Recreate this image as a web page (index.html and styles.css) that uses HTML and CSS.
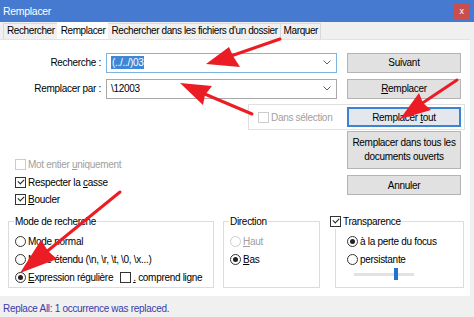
FILE: index.html
```html
<!DOCTYPE html>
<html lang="fr">
<head>
    <meta charset="UTF-8">
    <title>Remplacer</title>
    <link rel="stylesheet" href="styles.css">
</head>
<body>
<div class="window">
    <div class="titlebar">
        <span class="title">Remplacer</span>
        <span class="close">x</span>
    </div>

    <div class="tabs">
        <span class="tab">Rechercher</span>
        <span class="tab active">Remplacer</span>
        <span class="tab">Rechercher dans les fichiers d'un dossier</span>
        <span class="tab">Marquer</span>
    </div>

    <div class="body">
        <div class="panel">
            <div class="row">
                <span class="field-label">Recherche :</span>
                <div class="combo focused">
                    <span class="sel">(../../)03</span>
                    <svg class="chev" width="8" height="5" viewBox="0 0 8 5"><polyline points="0.5,0.5 4,4 7.5,0.5" fill="none" stroke="#606060" stroke-width="1"/></svg>
                </div>
                <button class="btn">Suivant</button>
            </div>
            <div class="row">
                <span class="field-label">Remplacer par :</span>
                <div class="combo">
                    <span class="val">\12003</span>
                    <svg class="chev" width="8" height="5" viewBox="0 0 8 5"><polyline points="0.5,0.5 4,4 7.5,0.5" fill="none" stroke="#606060" stroke-width="1"/></svg>
                </div>
                <button class="btn"><u>R</u>emplacer</button>
            </div>

            <div class="selection-row">
                <div class="selection-box">
                    <label class="check disabled"><span class="cb"></span><span>Dans sélection</span></label>
                    <button class="btn default">Remplacer <u>t</u>out</button>
                </div>
            </div>

            <div class="options">
                <div class="checks">
                    <label class="check disabled"><span class="cb"></span><span>Mot entier <u>u</u>niquement</span></label>
                    <label class="check"><span class="cb on"></span><span>Respecter la <u>c</u>asse</span></label>
                    <label class="check"><span class="cb on"></span><span><u>B</u>oucler</span></label>
                </div>
                <div class="side-buttons">
                    <button class="btn tall">Remplacer dans tous les<br>documents ouverts</button>
                    <button class="btn">Annuler</button>
                </div>
            </div>

            <div class="groups">
                <fieldset class="group mode">
                    <legend>Mode de recherche</legend>
                    <label class="radio"><span class="rd"></span><span>Mode normal</span></label>
                    <label class="radio"><span class="rd"></span><span>Mode étendu (\n, \r, \t, \0, \x...)</span></label>
                    <div class="radio-line">
                        <label class="radio"><span class="rd on"></span><span><u>E</u>xpression régulière</span></label>
                        <label class="check"><span class="cb"></span><span><u>.</u> comprend ligne</span></label>
                    </div>
                </fieldset>
                <fieldset class="group direction">
                    <legend>Direction</legend>
                    <label class="radio disabled"><span class="rd"></span><span><u>H</u>aut</span></label>
                    <label class="radio"><span class="rd on"></span><span><u>B</u>as</span></label>
                </fieldset>
                <fieldset class="group transp">
                    <legend><label class="check"><span class="cb on"></span><span>Transparence</span></label></legend>
                    <label class="radio"><span class="rd on"></span><span>à la perte du focus</span></label>
                    <label class="radio"><span class="rd"></span><span>persistante</span></label>
                    <div class="slider"><span class="thumb"></span></div>
                </fieldset>
            </div>
        </div>
    </div>

    <div class="status">Replace All: 1 occurrence was replaced.</div>

    <!-- flèches rouges d'annotation -->
    <svg class="arrows" width="474" height="317" viewBox="0 0 474 317">
        <g stroke="#ec1c24" stroke-width="3" stroke-linecap="round" fill="none">
            <line x1="280" y1="39" x2="228" y2="57"/>
            <line x1="252" y1="114" x2="200" y2="92"/>
            <line x1="457" y1="80" x2="418" y2="106"/>
            <line x1="120" y1="192" x2="45" y2="253"/>
        </g>
        <g fill="#ec1c24">
            <polygon points="206,64 229,47 233,56 240,67"/>
            <polygon points="180,83 212,86 205,95 203,105"/>
            <polygon points="400,119 419,93 423,103 431,110"/>
            <polygon points="20,273 41,240 48,251 57,259"/>
        </g>
    </svg>
</div>
</body>
</html>
```

FILE: styles.css
```css
* {
    box-sizing: border-box;
}
body {
    margin: 0;
    font-family: "Liberation Sans", Arial, sans-serif;
    font-size: 10px;
    letter-spacing: -0.3px;
    color: #000;
}
.window {
    position: relative;
    width: 474px;
    height: 317px;
    background: #f0f0f0;
    display: flex;
    flex-direction: column;
    overflow: hidden;
}

/* barre de titre */
.titlebar {
    height: 22px;
    background: #4679d0;
    display: flex;
    align-items: center;
    justify-content: space-between;
    padding: 0 4px 0 3px;
}
.title {
    color: #fff;
    font-size: 10.5px;
}
.close {
    width: 17px;
    height: 16px;
    background: #c94f4f;
    color: #fff;
    font-size: 9px;
    display: flex;
    align-items: center;
    justify-content: center;
}

/* onglets */
.tabs {
    height: 16px;
    display: flex;
    padding-left: 3px;
    margin-top: 1px;
    letter-spacing: -0.4px;
}
.tab {
    border: 1px solid #d9d9d9;
    border-bottom: none;
    padding: 0 2px 0 3px;
    line-height: 14px;
    background: #f0f0f0;
    margin-right: -1px;
}
.tab.active {
    background: #fff;
    border-color: #fff;
    position: relative;
    z-index: 1;
    margin-top: -1px;
    line-height: 16px;
}

.body {
    flex: 1;
    padding-right: 4px;
    display: flex;
}
.panel {
    flex: 1;
    background: #fff;
    border-top: 1px solid #e3e3e3;
    padding-top: 12px;
    margin-bottom: 1px;
}

/* lignes de saisie */
.row {
    display: flex;
    align-items: center;
    height: 21px;
    margin-bottom: 5px;
}
.field-label {
    width: 103px;
    text-align: right;
    padding-right: 2px;
}
.combo {
    width: 231px;
    height: 20px;
    margin-left: 3px;
    margin-right: 10px;
    border: 1px solid #a8a8a8;
    display: flex;
    align-items: center;
    justify-content: space-between;
    padding: 0 5px 0 4px;
}
.combo.focused {
    border-color: #7eb4e0;
}
.sel {
    background: #3f86d6;
    color: #fff;
    line-height: 13px;
    padding: 0 1px;
}
.chev {
    display: block;
}

.btn {
    width: 114px;
    height: 20px;
    border: 1px solid #b4b4b4;
    background: #e1e1e1;
    font-family: inherit;
    font-size: 10px;
    letter-spacing: -0.3px;
    color: #000;
    padding: 0;
}
.btn.default {
    border: 2px solid #3b83d3;
    background: #e4e8ee;
}
.btn.tall {
    height: 38px;
    line-height: 14px;
    padding: 0 2px;
}

/* cadre "Dans sélection" */
.selection-row {
    display: flex;
    padding-left: 248px;
}
.selection-box {
    width: 217px;
    height: 26px;
    border: 1px solid #e0e0e0;
    display: flex;
    align-items: center;
    justify-content: space-between;
    padding: 0 3px 0 9px;
}

/* cases à cocher et boutons radio */
.check, .radio {
    display: flex;
    align-items: center;
    white-space: nowrap;
}
.cb, .rd {
    width: 11px;
    height: 11px;
    border: 1px solid #333;
    background: #fff;
    margin-right: 2px;
    position: relative;
    flex: none;
}
.cb.on::after {
    content: "";
    position: absolute;
    left: 2px;
    top: 1px;
    width: 5px;
    height: 3px;
    border-left: 1px solid #222;
    border-bottom: 1px solid #222;
    transform: rotate(-45deg);
}
.rd {
    border-radius: 50%;
}
.rd.on::after {
    content: "";
    position: absolute;
    left: 2px;
    top: 2px;
    width: 5px;
    height: 5px;
    border-radius: 50%;
    background: #222;
}
.disabled {
    color: #a0a0a0;
}
.disabled .cb, .disabled .rd {
    border-color: #cccccc;
}

.options {
    display: flex;
    margin-top: 1px;
}
.checks {
    flex: 1;
    padding-left: 15px;
    padding-top: 25px;
}
.checks .check {
    height: 17.5px;
}
.side-buttons {
    width: 114px;
    margin-right: 9px;
    display: flex;
    flex-direction: column;
    gap: 6px;
}

/* groupes du bas */
.groups {
    display: flex;
    padding-left: 8px;
    margin-top: 6px;
    gap: 9px;
}
.group {
    margin: 0;
    min-width: 0;
    border: 1px solid #dcdcdc;
    height: 73px;
    padding: 4px 0 0 6px;
}
.group legend {
    padding: 0 1px;
    margin-left: -1px;
    line-height: 14px;
}
.group .radio {
    height: 18px;
}
.mode {
    width: 206px;
}
.direction {
    width: 97px;
}
.transp {
    width: 129px;
    margin-left: 6px;
    padding-left: 11px;
}
.transp legend {
    margin-left: -18px;
}
.radio-line {
    display: flex;
    align-items: center;
    gap: 7px;
}
.slider {
    width: 60px;
    height: 3px;
    margin: 4px 0 0 7px;
    background: #e2e2e2;
    position: relative;
}
.thumb {
    position: absolute;
    left: 40px;
    top: -5px;
    width: 4px;
    height: 12px;
    background: #1f74d0;
}

/* barre d'état */
.status {
    height: 20px;
    line-height: 20px;
    padding: 2px 0 0 3px;
    color: #3a3aa8;
}

.arrows {
    position: absolute;
    left: 0;
    top: 0;
    pointer-events: none;
}
```
